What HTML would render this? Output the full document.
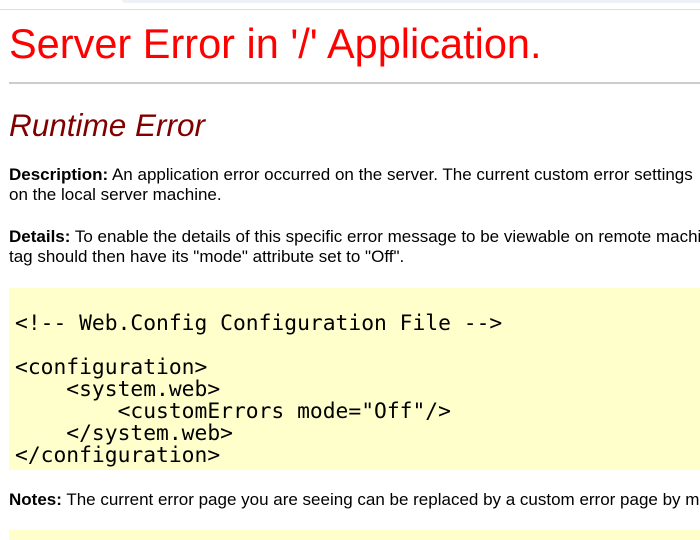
<!DOCTYPE html>
<html><head><style>
html,body{margin:0;background:#fff;width:700px;height:540px;overflow:hidden;}
body{position:relative;font-family:"Liberation Sans",Arial,sans-serif;}
.wrap{position:absolute;left:0;top:0;width:700px;height:540px;overflow:hidden;}
.topbar{position:absolute;left:122px;top:0;width:578px;height:3px;background:#eef2f8;border-radius:0 0 0 6px;}
.topline{position:absolute;left:0;top:9px;width:700px;height:1px;background:#ddd;}
h1{position:absolute;left:9px;top:20px;margin:0;font-weight:normal;color:#f00;font-size:41.5px;line-height:48px;white-space:nowrap;}
hr{position:absolute;left:9px;top:82px;width:691px;margin:0;border:0;height:2px;background:#ccc;}
h2{position:absolute;left:9px;top:106px;margin:0;font-weight:normal;font-style:italic;color:#800000;font-size:31.5px;line-height:38px;white-space:nowrap;}
.p{position:absolute;left:9px;width:691px;overflow:hidden;font-size:17px;line-height:20px;color:#000;white-space:nowrap;}
.code{position:absolute;left:9px;top:288px;width:691px;height:182px;background:#ffffcc;}
pre{position:absolute;left:15px;top:313px;margin:0;font-family:"DejaVu Sans Mono",monospace;font-size:21.3px;line-height:22px;color:#000;}
.code2{position:absolute;left:9px;top:530px;width:691px;height:10px;background:#ffffcc;}
</style></head><body><div class="wrap">
<div class="topbar"></div><div class="topline"></div>
<h1>Server Error in '/' Application.</h1>
<hr>
<h2>Runtime Error</h2>
<div class="p" style="top:165px"><b>Description:</b> An application error occurred on the server. The current custom error settings<br>on the local server machine.</div>
<div class="p" style="top:227px"><b>Details:</b> To enable the details of this specific error message to be viewable on remote machines<br>tag should then have its "mode" attribute set to "Off".</div>
<div class="code"></div>
<pre>&lt;!-- Web.Config Configuration File --&gt;

&lt;configuration&gt;
    &lt;system.web&gt;
        &lt;customErrors mode="Off"/&gt;
    &lt;/system.web&gt;
&lt;/configuration&gt;</pre>
<div class="p" style="top:490px"><b>Notes:</b> The current error page you are seeing can be replaced by a custom error page by modifying</div>
<div class="code2"></div>
</div></body></html>
